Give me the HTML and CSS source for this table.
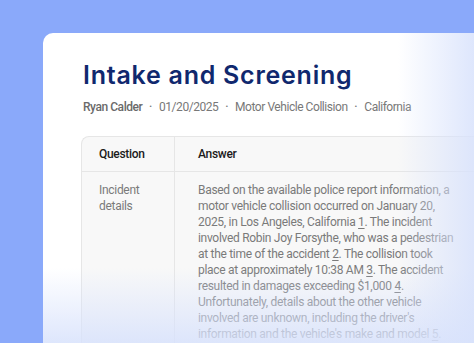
FILE: index.html
```html
<!DOCTYPE html>
<html>
<head>
<meta charset="utf-8">
<link rel="stylesheet" href="styles.css">
</head>
<body>
<div class="card">
  <h1 class="title">Intake and Screening</h1>
  <div class="meta">
    <span class="name">Ryan Calder</span>
    <span class="dot">•</span>
    <span>01/20/2025</span>
    <span class="dot">•</span>
    <span>Motor Vehicle Collision</span>
    <span class="dot">•</span>
    <span>California</span>
  </div>
  <div class="table">
    <div class="th q">Question</div>
    <div class="th a">Answer</div>
    <div class="td q">Incident details</div>
    <div class="td a">Based on the available police report information, a motor vehicle collision occurred on January 20, 2025, in Los Angeles, California <u>1</u>. The incident involved Robin Joy Forsythe, who was a pedestrian at the time of the accident <u>2</u>. The collision took place at approximately 10:38 AM <u>3</u>. The accident resulted in damages exceeding $1,000 <u>4</u>. Unfortunately, details about the other vehicle involved are unknown, including the driver's information and the vehicle's make and model <u>5</u>.</div>
  </div>
  <div class="fade"></div>
</div>
</body>
</html>
```

FILE: styles.css
```css
html, body {
  margin: 0;
  padding: 0;
}
body {
  background: #8aa9fa;
  width: 474px;
  height: 343px;
  overflow: hidden;
  font-family: Roboto, "Noto Sans", sans-serif;
}
.card {
  position: relative;
  margin: 33px 0 0 43px;
  width: 431px;
  height: 310px;
  overflow: hidden;
  background: #ffffff;
  border-radius: 10px 0 0 0;
  padding: 26px 0 0 40px;
  box-sizing: border-box;
}
.title {
  margin: 0;
  font-family: Inter, "Noto Sans", sans-serif;
  font-size: 25px;
  line-height: 32px;
  font-weight: 600;
  color: #10286e;
  letter-spacing: 0.75px;
  white-space: nowrap;
}
.meta {
  margin-top: 8px;
  display: flex;
  gap: 7px;
  font-size: 12px;
  line-height: 16px;
  color: #787878;
  letter-spacing: -0.45px;
  white-space: nowrap;
}
.meta .name {
  font-weight: 500;
  color: #6a6a6a;
}
.meta .dot {
  font-size: 8px;
  letter-spacing: 0;
}
.table {
  margin-top: 21px;
  margin-left: -2px;
  width: 420px;
  display: grid;
  grid-template-columns: 93px 327px;
  background: #f8f8f8;
  border: 1px solid #e6e6e6;
  border-right: none;
  border-radius: 8px 0 0 0;
}
.th {
  height: 34px;
  display: flex;
  align-items: center;
  font-size: 12px;
  font-weight: 500;
  color: #1b1b1b;
  letter-spacing: -0.3px;
  border-bottom: 1px solid #e6e6e6;
}
.q {
  padding-left: 17px;
  border-right: 1px solid #e6e6e6;
}
.a {
  padding-left: 23px;
}
.td {
  padding-top: 10px;
  font-size: 12px;
  line-height: 16px;
  color: #7a7a7a;
  letter-spacing: -0.3px;
  height: 200px;
}
.td.a {
  width: 260px;
}
.td.q {
  padding-right: 10px;
}
.td u {
  text-underline-offset: 2px;
}
.fade {
  position: absolute;
  inset: 0;
  pointer-events: none;
  background:
    linear-gradient(to right, rgba(216, 226, 252, 0) 355px, rgba(216, 226, 252, 0.85) 431px),
    linear-gradient(to bottom, rgba(216, 226, 252, 0) 235px, rgba(216, 226, 252, 0.85) 310px);
}
```
